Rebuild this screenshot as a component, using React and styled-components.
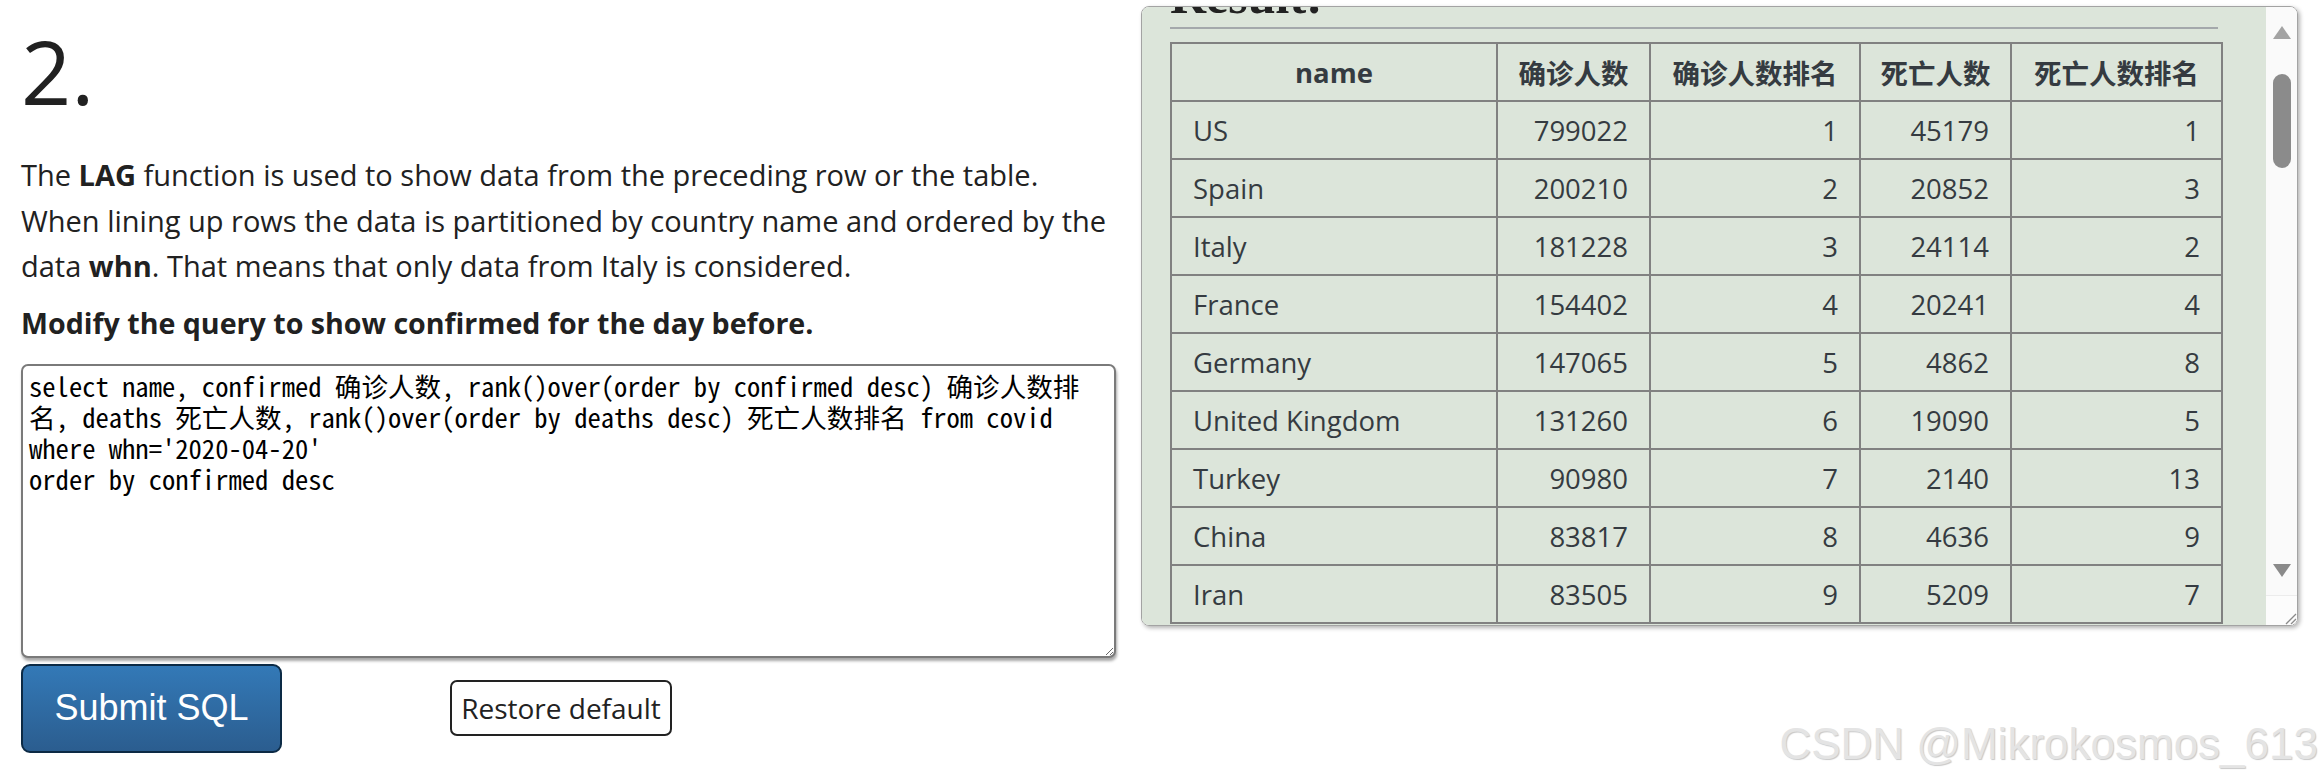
import styled, { createGlobalStyle } from "styled-components";

const GlobalStyle = createGlobalStyle`
  body {
    margin: 0;
    background: #ffffff;
    font-family: "Open Sans", "Noto Sans", sans-serif;
    color: #212529;
  }
`;

const SQL_TEXT =
  "select name, confirmed 确诊人数, rank()over(order by confirmed desc) 确诊人数排名, deaths 死亡人数, rank()over(order by deaths desc) 死亡人数排名 from covid\nwhere whn='2020-04-20'\norder by confirmed desc";

const rows = [
  ["US", 799022, 1, 45179, 1],
  ["Spain", 200210, 2, 20852, 3],
  ["Italy", 181228, 3, 24114, 2],
  ["France", 154402, 4, 20241, 4],
  ["Germany", 147065, 5, 4862, 8],
  ["United Kingdom", 131260, 6, 19090, 5],
  ["Turkey", 90980, 7, 2140, 13],
  ["China", 83817, 8, 4636, 9],
  ["Iran", 83505, 9, 5209, 7],
];

const Page = styled.div`
  position: relative;
  display: flex;
  align-items: flex-start;
  width: 2324px;
  height: 782px;
  overflow: hidden;
`;

const LeftColumn = styled.section`
  display: flex;
  flex-direction: column;
  width: 1095px;
  margin-left: 21px;
`;

const Number = styled.h1`
  margin: 18px 0 0;
  font-size: 88px;
  line-height: 106px;
  font-weight: 400;
  color: #212121;
`;

const Intro = styled.p`
  margin: 28px 0 0;
  font-size: 29px;
  line-height: 45.5px;
  color: #212121;
`;

const Task = styled.p`
  margin: 16px 0 0;
  font-size: 28.6px;
  line-height: 36px;
  font-weight: 700;
  color: #212121;
`;

const SqlBox = styled.textarea`
  box-sizing: border-box;
  width: 1095px;
  height: 294px;
  margin-top: 23px;
  padding: 4px 14px 3px 6px;
  border: 2px solid #7a7a7a;
  border-radius: 7px;
  box-shadow: 1px 3px 3px rgba(0, 0, 0, 0.35);
  font-family: "Noto Sans Mono CJK SC", "Liberation Mono", monospace;
  font-size: 26.6px;
  line-height: 31px;
  color: #000;
  background: #fff;
  resize: both;
  outline: none;
`;

const ButtonRow = styled.div`
  display: flex;
  align-items: center;
  margin-top: 6px;
`;

const SubmitButton = styled.button`
  box-sizing: border-box;
  width: 261px;
  height: 89px;
  border: 2px solid #0c2a45;
  border-radius: 9px;
  background: linear-gradient(#3379b7, #2b5d8f);
  color: #ffffff;
  font-family: "Liberation Sans", Arial, sans-serif;
  font-size: 36px;
  cursor: pointer;
`;

const RestoreButton = styled.button`
  box-sizing: border-box;
  width: 222px;
  height: 56px;
  margin-left: 168px;
  padding: 0;
  border: 2px solid #222;
  border-radius: 7px;
  background: #ffffff;
  color: #222;
  font-family: "Open Sans", sans-serif;
  font-size: 28px;
  cursor: pointer;
`;

const ResultPanel = styled.section`
  box-sizing: border-box;
  display: flex;
  width: 1157px;
  height: 620px;
  margin: 6px 0 0 25px;
  border: 1px solid #a3a3a3;
  border-radius: 8px;
  overflow: hidden;
  box-shadow: 2px 2px 4px rgba(0, 0, 0, 0.3);
`;

const Viewport = styled.div`
  flex: 1;
  overflow: hidden;
  padding: 0 48px 0 28px;
  background: #dce5da;
`;

const ResultTitle = styled.h2`
  margin: -41px 0 0;
  font-family: "Liberation Serif", "Times New Roman", serif;
  font-size: 50px;
  line-height: 60px;
  font-weight: 700;
  color: #222;
`;

const Rule = styled.hr`
  margin: 1px 0 0;
  border: 0;
  border-top: 2px solid #a4a8ab;
`;

const ResultTable = styled.table`
  width: 1051px;
  margin-top: 13px;
  table-layout: fixed;
  border-collapse: collapse;
  font-size: 27.5px;
  color: #353b41;
`;

const Cell = styled.td`
  height: 56px;
  padding: 0 21px;
  border: 2px solid #818181;
  text-align: ${(p) => p.$align || "right"};
  white-space: nowrap;
  font-family: "Open Sans", "Noto Sans CJK SC", sans-serif;
`;

const HeadCell = styled.th`
  height: 56px;
  padding: 0 16px;
  border: 2px solid #818181;
  text-align: center;
  font-weight: 700;
  white-space: nowrap;
  font-family: "Open Sans", "Noto Sans CJK SC", sans-serif;
`;

const ScrollTrack = styled.div`
  display: flex;
  flex-direction: column;
  align-items: center;
  width: 31px;
  background: #fafafa;
`;

const Arrow = styled.div`
  width: 0;
  height: 0;
  margin-top: ${(p) => (p.$down ? "0" : "19px")};
  margin-bottom: ${(p) => (p.$down ? "18px" : "0")};
  border-left: 9px solid transparent;
  border-right: 9px solid transparent;
  ${(p) =>
    p.$down
      ? "border-top: 13px solid #8a8a8a;"
      : "border-bottom: 13px solid #a3a3a3;"}
`;

const Thumb = styled.div`
  width: 18px;
  height: 94px;
  margin-top: 35px;
  border-radius: 9px;
  background: #8b8b8b;
`;

const TrackSpace = styled.div`
  flex: 1;
`;

const Corner = styled.div`
  display: flex;
  align-items: flex-end;
  justify-content: flex-end;
  box-sizing: border-box;
  width: 31px;
  height: 30px;
  border-top: 1px solid #ececec;
  background: #fcfcfc;
`;

const Watermark = styled.div`
  position: absolute;
  right: 6px;
  top: 719px;
  font-family: "Liberation Sans", Arial, sans-serif;
  font-size: 44px;
  color: #e4e4e4;
  text-shadow: 1px 1px 1px rgba(0, 0, 0, 0.22);
  pointer-events: none;
`;

function Grip() {
  return (
    <svg width="14" height="14" viewBox="0 0 14 14">
      <path d="M13 3 L3 13 M13 8 L8 13" stroke="#8a8a8a" strokeWidth="1.3" />
    </svg>
  );
}

export default function App() {
  return (
    <Page>
      <GlobalStyle />
      <LeftColumn>
        <Number>2.</Number>
        <Intro>
          The <b>LAG</b> function is used to show data from the preceding row or the table.
          <br />
          When lining up rows the data is partitioned by country name and ordered by the
          <br />
          data <b>whn</b>. That means that only data from Italy is considered.
        </Intro>
        <Task>Modify the query to show confirmed for the day before.</Task>
        <SqlBox defaultValue={SQL_TEXT} spellCheck={false} />
        <ButtonRow>
          <SubmitButton>Submit SQL</SubmitButton>
          <RestoreButton>Restore default</RestoreButton>
        </ButtonRow>
      </LeftColumn>

      <ResultPanel>
        <Viewport>
          <ResultTitle>Result:</ResultTitle>
          <Rule />
          <ResultTable>
            <colgroup>
              <col style={{ width: 326 }} />
              <col style={{ width: 153 }} />
              <col style={{ width: 210 }} />
              <col style={{ width: 151 }} />
              <col style={{ width: 211 }} />
            </colgroup>
            <thead>
              <tr>
                <HeadCell>name</HeadCell>
                <HeadCell>确诊人数</HeadCell>
                <HeadCell>确诊人数排名</HeadCell>
                <HeadCell>死亡人数</HeadCell>
                <HeadCell>死亡人数排名</HeadCell>
              </tr>
            </thead>
            <tbody>
              {rows.map((r) => (
                <tr key={r[0]}>
                  <Cell $align="left">{r[0]}</Cell>
                  <Cell>{r[1]}</Cell>
                  <Cell>{r[2]}</Cell>
                  <Cell>{r[3]}</Cell>
                  <Cell>{r[4]}</Cell>
                </tr>
              ))}
            </tbody>
          </ResultTable>
        </Viewport>
        <ScrollTrack>
          <Arrow />
          <Thumb />
          <TrackSpace />
          <Arrow $down />
          <Corner>
            <Grip />
          </Corner>
        </ScrollTrack>
      </ResultPanel>

      <Watermark>CSDN @Mikrokosmos_613</Watermark>
    </Page>
  );
}
